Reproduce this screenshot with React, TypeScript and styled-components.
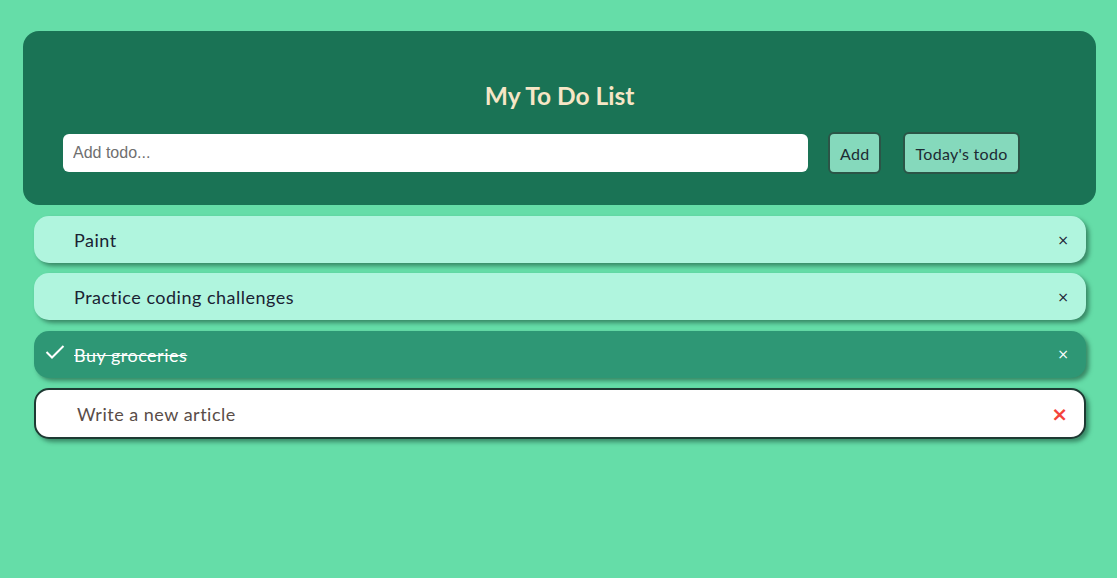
import React from "react";
import styled, { createGlobalStyle } from "styled-components";

const GlobalStyle = createGlobalStyle`
  html, body {
    margin: 0;
    padding: 0;
    background: #65dda8;
  }
  body {
    font-family: "Lato", "Noto Sans", sans-serif;
  }
  * { box-sizing: border-box; }
`;

const Page = styled.div`
  min-height: 578px;
  padding: 31px 21px 0 23px;
`;

const Header = styled.header`
  background: #1a7355;
  border-radius: 16px;
  padding: 49px 40px 31px;
  display: flex;
  flex-direction: column;
  align-items: center;
  gap: 20px;
`;

const Title = styled.h1`
  margin: 0;
  font-family: "Lato", sans-serif;
  font-size: 24.5px;
  line-height: 32px;
  font-weight: 700;
  color: #f6e6c6;
`;

const FormRow = styled.form`
  align-self: stretch;
  display: flex;
  align-items: center;
  height: 42px;
`;

const TodoInput = styled.input`
  width: 745px;
  height: 38px;
  border: none;
  border-radius: 6px;
  padding: 0 10px;
  font-family: "Liberation Sans", Arial, sans-serif;
  font-size: 16px;
  color: #333;
  outline: none;
  &::placeholder {
    color: #6f6f6f;
  }
`;

const Button = styled.button<{ $ml: number }>`
  margin-left: ${(p) => p.$ml}px;
  height: 42px;
  padding: 0 10px;
  background: #85d9bc;
  border: 2px solid #2b5547;
  border-radius: 6px;
  font-family: "Lato", sans-serif;
  font-size: 16px;
  letter-spacing: 0.3px;
  color: #1d2b33;
  cursor: pointer;
`;

const List = styled.ul`
  list-style: none;
  margin: 11px 10px 0 11px;
  padding: 0;
  display: flex;
  flex-direction: column;
  gap: 10.4px;
`;

type Variant = "normal" | "done" | "editing";

const Item = styled.li<{ $variant: Variant }>`
  position: relative;
  display: flex;
  align-items: center;
  height: ${(p) => (p.$variant === "editing" ? 51 : 47)}px;
  padding: 0 17px 0 ${(p) => (p.$variant === "editing" ? 41 : 40)}px;
  border-radius: 15px;
  box-shadow: 3px 3px 4px rgba(20, 70, 50, 0.55);
  background: ${(p) =>
    p.$variant === "done" ? "#2e9775" : p.$variant === "editing" ? "#ffffff" : "#b0f5de"};
  border: ${(p) => (p.$variant === "editing" ? "2px solid #1e3a33" : "none")};
  color: ${(p) =>
    p.$variant === "done" ? "#ffffff" : p.$variant === "editing" ? "#5a4d48" : "#1a2233"};
`;

const ItemText = styled.span<{ $done?: boolean }>`
  flex: 1;
  font-size: 18px;
  letter-spacing: 0.5px;
  padding-top: 1px;
  text-decoration: ${(p) => (p.$done ? "line-through" : "none")};
`;

const Check = styled.svg`
  position: absolute;
  left: 11px;
  top: 13px;
`;

const Remove = styled.span<{ $red?: boolean }>`
  font-family: "DejaVu Sans", sans-serif;
  font-size: ${(p) => (p.$red ? 20 : 14)}px;
  font-weight: ${(p) => (p.$red ? 700 : 400)};
  color: ${(p) => (p.$red ? "#f4433a" : "inherit")};
  line-height: 1;
  cursor: pointer;
  margin-right: ${(p) => (p.$red ? -1 : 0)}px;
`;

const todos: { text: string; variant: Variant }[] = [
  { text: "Paint", variant: "normal" },
  { text: "Practice coding challenges", variant: "normal" },
  { text: "Buy groceries", variant: "done" },
  { text: "Write a new article", variant: "editing" },
];

export default function App() {
  return (
    <>
      <GlobalStyle />
      <Page>
        <Header>
          <Title>My To Do List</Title>
          <FormRow onSubmit={(e) => e.preventDefault()}>
            <TodoInput placeholder="Add todo..." />
            <Button $ml={20} type="submit">Add</Button>
            <Button $ml={22} type="button">Today's todo</Button>
          </FormRow>
        </Header>
        <List>
          {todos.map((t) => (
            <Item key={t.text} $variant={t.variant}>
              {t.variant === "done" && (
                <Check width="20" height="16" viewBox="0 0 20 16">
                  <polyline
                    points="1.5,8 7,13.5 18.5,2"
                    fill="none"
                    stroke="#ffffff"
                    strokeWidth="2"
                  />
                </Check>
              )}
              <ItemText $done={t.variant === "done"}>{t.text}</ItemText>
              <Remove $red={t.variant === "editing"}>×</Remove>
            </Item>
          ))}
        </List>
      </Page>
    </>
  );
}
